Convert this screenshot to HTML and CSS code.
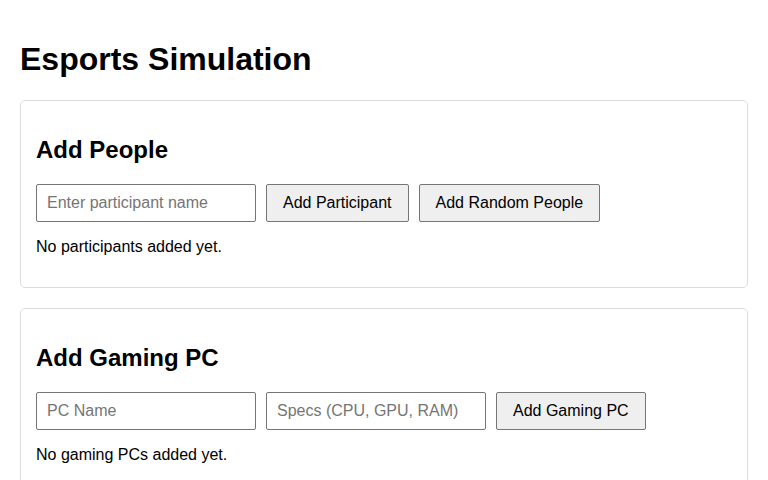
FILE: index.html
```html
<!DOCTYPE html>
<html lang="en">
<head>
<meta charset="utf-8">
<title>Esports Simulation</title>
<link rel="stylesheet" href="styles.css">
</head>
<body>
<h1 class="title">Esports Simulation</h1>
<section class="card">
  <h2 class="card-title">Add People</h2>
  <div class="row">
    <input class="field" type="text" placeholder="Enter participant name">
    <button class="btn">Add Participant</button>
    <button class="btn">Add Random People</button>
  </div>
  <p class="empty">No participants added yet.</p>
</section>
<section class="card">
  <h2 class="card-title">Add Gaming PC</h2>
  <div class="row">
    <input class="field" type="text" placeholder="PC Name">
    <input class="field" type="text" placeholder="Specs (CPU, GPU, RAM)">
    <button class="btn">Add Gaming PC</button>
  </div>
  <p class="empty">No gaming PCs added yet.</p>
</section>
</body>
</html>
```
FILE: styles.css
```css
html, body {
  margin: 0;
  background: #ffffff;
}
body {
  padding: 20px;
  font-family: "Liberation Sans", Arial, sans-serif;
  color: #000000;
  font-size: 16px;
}
.title {
  font-size: 32px;
  font-weight: bold;
  margin: 21.44px 0;
}
.card {
  border: 1px solid #dddddd;
  border-radius: 5px;
  padding: 15px;
  margin-bottom: 20px;
}
.card-title {
  font-size: 24px;
  font-weight: bold;
  margin: 19.92px 0;
}
.row {
  display: flex;
  gap: 10px;
  align-items: stretch;
}
.field {
  font-family: "Liberation Sans", Arial, sans-serif;
  font-size: 16px;
  width: 220px;
  box-sizing: border-box;
  padding: 9px 10px;
  border: 1px solid #767676;
  border-radius: 2px;
  margin: 0;
  color: #000;
  background: #fff;
  line-height: 18px;
}
.field::placeholder {
  color: #757575;
}
.btn {
  font-family: "Liberation Sans", Arial, sans-serif;
  font-size: 16px;
  padding: 9px 16px;
  border: 1px solid #767676;
  border-radius: 2px;
  background: #efefef;
  color: #000;
  margin: 0;
  line-height: 18px;
}
.empty {
  margin: 16px 0;
}
```
